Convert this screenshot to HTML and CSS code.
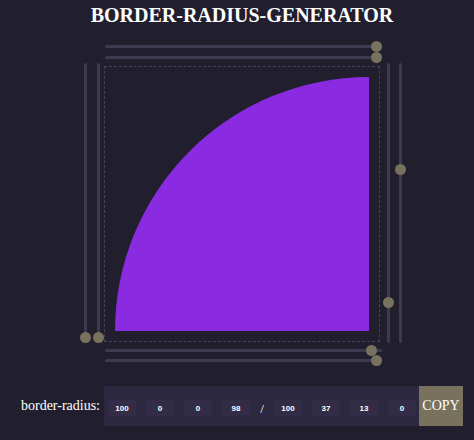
FILE: index.html
```html
<!DOCTYPE html>
<html lang="en">
<head>
<meta charset="utf-8">
<title>Border Radius Generator</title>
<link rel="stylesheet" href="styles.css">
</head>
<body>
<main class="page">
  <h1 class="title">BORDER-RADIUS-GENERATOR</h1>
  <section class="editor">
    <div class="hgroup hgroup-top">
      <div class="hslider" style="--p:1"><div class="htrack"></div><span class="thumb"></span></div>
      <div class="hslider" style="--p:1"><div class="htrack"></div><span class="thumb"></span></div>
    </div>
    <div class="vgroup vgroup-left">
      <div class="vslider" style="--p:1"><div class="vtrack"></div><span class="thumb"></span></div>
      <div class="vslider" style="--p:1"><div class="vtrack"></div><span class="thumb"></span></div>
    </div>
    <div class="preview">
      <div class="shape" style="border-radius:100% 0% 0% 98% / 100% 37% 13% 0%"></div>
    </div>
    <div class="vgroup vgroup-right">
      <div class="vslider" style="--p:0.87"><div class="vtrack"></div><span class="thumb"></span></div>
      <div class="vslider" style="--p:0.375"><div class="vtrack"></div><span class="thumb"></span></div>
    </div>
    <div class="hgroup hgroup-bottom">
      <div class="hslider" style="--p:0.98"><div class="htrack"></div><span class="thumb"></span></div>
      <div class="hslider" style="--p:1"><div class="htrack"></div><span class="thumb"></span></div>
    </div>
  </section>
  <div class="output">
    <span class="label">border-radius:</span>
    <div class="values">
      <span class="val">100</span>
      <span class="val">0</span>
      <span class="val">0</span>
      <span class="val">98</span>
      <span class="slash">/</span>
      <span class="val">100</span>
      <span class="val">37</span>
      <span class="val">13</span>
      <span class="val">0</span>
    </div>
    <button class="copy" type="button">COPY</button>
  </div>
</main>
</body>
</html>
```
FILE: styles.css
```css
* { box-sizing: border-box; }

html, body {
  margin: 0;
  padding: 0;
  background: #211f2e;
  height: 100%;
}

.page {
  display: flex;
  flex-direction: column;
  align-items: center;
  padding-left: 10px;
  font-family: "Liberation Serif", "Times New Roman", serif;
  color: #ffffff;
}

.title {
  margin: 4px 0 0;
  font-size: 20px;
  line-height: 23px;
  font-weight: bold;
  color: #ffffff;
}

.editor {
  margin-top: 14px;
  display: grid;
  grid-template-columns: 24px 276px 24px;
  grid-template-rows: 22px 280px 22px;
  column-gap: 0;
}

.hgroup {
  grid-column: 2;
  display: flex;
  flex-direction: column;
  padding-left: 1px;
}
.hgroup-top { grid-row: 1; }
.hgroup-bottom { grid-row: 3; margin-top: 2px; }

.vgroup {
  grid-row: 2;
  display: flex;
  gap: 2px;
}
.vgroup-left { grid-column: 1; }
.vgroup-right { grid-column: 3; margin-left: 3px; }

.hslider {
  position: relative;
  width: 277px;
  height: 11px;
}
.htrack {
  margin-top: 4px;
  height: 3px;
  background: #3d394f;
  border-radius: 2px;
}
.hslider .thumb {
  position: absolute;
  top: 0;
  left: calc((100% - 11px) * var(--p));
}

.vslider {
  position: relative;
  width: 11px;
  height: 280px;
}
.vtrack {
  margin-left: 4px;
  width: 3px;
  height: 100%;
  background: #3d394f;
  border-radius: 2px;
}
.vslider .thumb {
  position: absolute;
  left: 0;
  top: calc((100% - 11px) * var(--p));
}

.thumb {
  width: 11px;
  height: 11px;
  border-radius: 50%;
  background: #78715e;
}

.preview {
  grid-column: 2;
  grid-row: 2;
  align-self: start;
  margin-top: 3px;
  width: 276px;
  height: 276px;
  padding: 10px;
  border: 1px dashed #45415a;
}

.shape {
  width: 254px;
  height: 254px;
  background: #8a2be2;
}

.output {
  margin-top: 21px;
  display: flex;
  align-items: center;
  height: 40px;
}

.label {
  font-size: 14px;
  color: #ffffff;
  margin-right: 4px;
}

.values {
  display: flex;
  align-items: center;
  gap: 10px;
  width: 315px;
  height: 40px;
  padding: 4px 3px 0 4px;
  background: #2c2840;
}

.val {
  width: 28px;
  height: 16px;
  display: flex;
  align-items: center;
  justify-content: center;
  background: #322c47;
  font-family: "Liberation Sans", Arial, sans-serif;
  font-size: 8px;
  font-weight: bold;
  color: #ffffff;
}

.slash {
  width: 4px;
  font-size: 13px;
  line-height: 1;
  color: #ffffff;
  text-align: center;
}

.copy {
  width: 44px;
  height: 40px;
  margin: 0;
  padding: 0;
  border: none;
  background: #78715e;
  color: #ffffff;
  font-family: "Liberation Serif", "Times New Roman", serif;
  font-size: 14px;
}
```
